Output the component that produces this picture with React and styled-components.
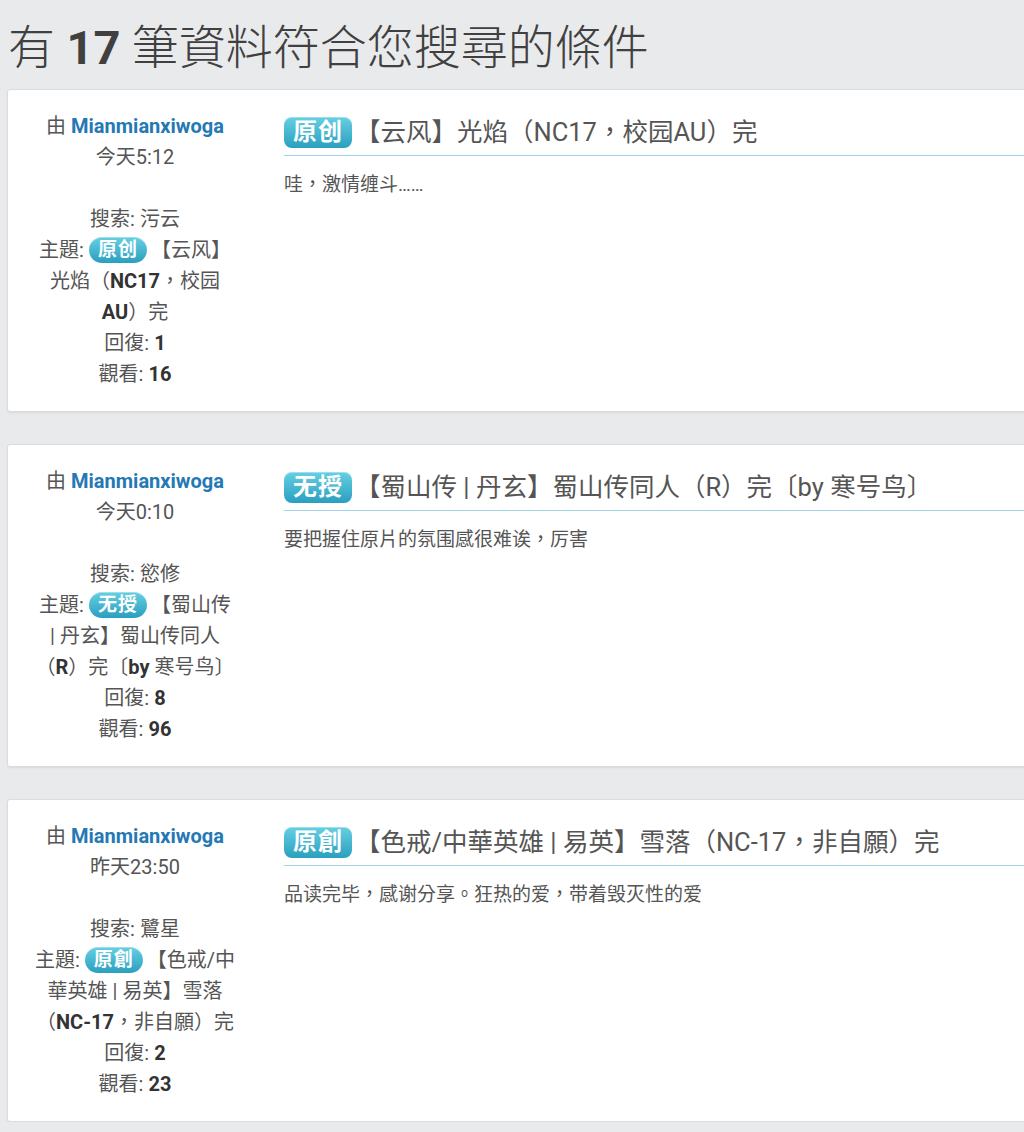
import React from "react";
import styled, { createGlobalStyle } from "styled-components";

const GlobalStyle = createGlobalStyle`
  html, body {
    margin: 0;
    padding: 0;
    background: #e9eaec;
    overflow: hidden;
  }
  body {
    font-family: Roboto, "Noto Sans CJK TC", sans-serif;
    color: #555;
  }
`;

const Page = styled.div`
  padding: 0 0 0 7px;
  width: 1120px;
`;

const Heading = styled.h1`
  margin: 0 0 15px 1px;
  padding-top: 22px;
  font-size: 47px;
  line-height: 52px;
  font-weight: 300;
  color: #404040;
  strong {
    font-weight: 700;
  }
`;

const List = styled.div`
  display: flex;
  flex-direction: column;
  gap: 32px;
`;

const Card = styled.div`
  display: flex;
  background: #fff;
  border: 1px solid #dcdcdc;
  border-radius: 3px;
  box-shadow: 0 1px 2px rgba(0, 0, 0, 0.08);
  padding: 21px 0 21px 26.5px;
  gap: 48.5px;
`;

const Meta = styled.div`
  width: 201px;
  flex: none;
  text-align: center;
  font-size: 20px;
  line-height: 31px;
  color: #555;
  b {
    color: #333;
    font-weight: 700;
  }
`;

const Author = styled.a`
  color: #2478b4;
  font-weight: 700;
  text-decoration: none;
`;

const Gap = styled.div`
  height: 31px;
`;

const Badge = styled.span`
  display: inline-block;
  color: #fff;
  font-weight: 700;
  background: linear-gradient(#66cfe3, #2a9fbf);
  box-shadow: inset 0 1px 0 rgba(255, 255, 255, 0.35);
  border-radius: ${(p) => (p.small ? "13px" : "8px")};
  font-size: ${(p) => (p.small ? "19px" : "24px")};
  line-height: ${(p) => (p.small ? "26px" : "31px")};
  padding: 0 9px;
  margin-right: ${(p) => (p.small ? "4px" : "3px")};
  vertical-align: 1px;
  letter-spacing: 1px;
`;

const Main = styled.div`
  flex: 1;
  padding-top: 5px;
`;

const Title = styled.div`
  font-size: 25.5px;
  line-height: 32px;
  color: #555;
  padding-bottom: 7px;
  border-bottom: 1px solid #9fd2e2;
`;

const Body = styled.div`
  margin-top: 17px;
  font-size: 19px;
  line-height: 24px;
  color: #555;
`;

const results = [
  {
    time: "今天5:12",
    search: "污云",
    badge: "原创",
    subject: (
      <>
        【云风】光焰（<b>NC17</b>，校园<b>AU</b>）完
      </>
    ),
    title: "【云风】光焰（NC17，校园AU）完",
    replies: 1,
    views: 16,
    body: "哇，激情缠斗……",
  },
  {
    time: "今天0:10",
    search: "慾修",
    badge: "无授",
    subject: (
      <>
        【蜀山传 | 丹玄】蜀山传同人（<b>R</b>）完〔<b>by</b> 寒号鸟〕
      </>
    ),
    title: "【蜀山传 | 丹玄】蜀山传同人（R）完〔by 寒号鸟〕",
    replies: 8,
    views: 96,
    body: "要把握住原片的氛围感很难诶，厉害",
  },
  {
    time: "昨天23:50",
    search: "鷺星",
    badge: "原創",
    subject: (
      <>
        【色戒/中華英雄 | 易英】雪落（<b>NC-17</b>，非自願）完
      </>
    ),
    title: "【色戒/中華英雄 | 易英】雪落（NC-17，非自願）完",
    replies: 2,
    views: 23,
    body: "品读完毕，感谢分享。狂热的爱，带着毁灭性的爱",
  },
];

export default function App() {
  return (
    <Page>
      <GlobalStyle />
      <Heading>
        有 <strong>17</strong> 筆資料符合您搜尋的條件
      </Heading>
      <List>
        {results.map((r, i) => (
          <Card key={i}>
            <Meta>
              <div>
                由 <Author href="#">Mianmianxiwoga</Author>
              </div>
              <div>{r.time}</div>
              <Gap />
              <div>搜索: {r.search}</div>
              <div>
                主題: <Badge small>{r.badge}</Badge>
                {r.subject}
              </div>
              <div>
                回復: <b>{r.replies}</b>
              </div>
              <div>
                觀看: <b>{r.views}</b>
              </div>
            </Meta>
            <Main>
              <Title>
                <Badge>{r.badge}</Badge>
                {r.title}
              </Title>
              <Body>{r.body}</Body>
            </Main>
          </Card>
        ))}
      </List>
    </Page>
  );
}
